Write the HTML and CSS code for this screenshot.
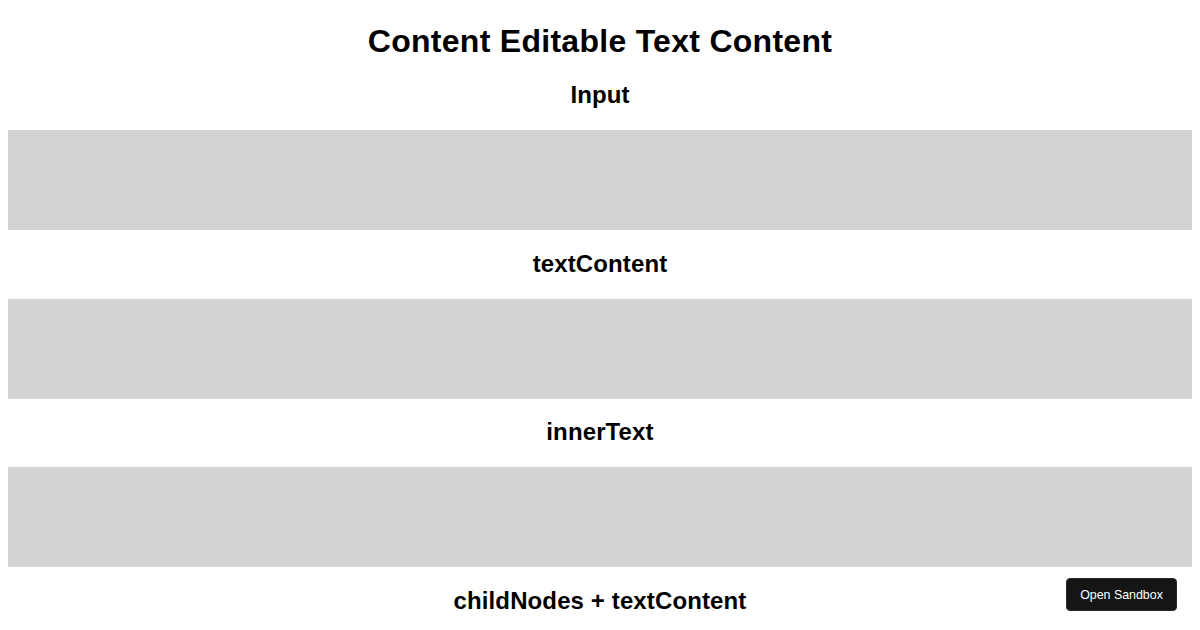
FILE: index.html
```html
<!DOCTYPE html>
<html>
<head>
<meta charset="utf-8">
<link rel="stylesheet" href="styles.css">
</head>
<body>
<h1 class="title">Content Editable Text Content</h1>
<h2 class="label">Input</h2>
<div class="box" contenteditable="true"></div>
<h2 class="label">textContent</h2>
<div class="box"></div>
<h2 class="label">innerText</h2>
<div class="box"></div>
<h2 class="label">childNodes + textContent</h2>
<div class="box"></div>
<a class="sandbox" href="#">Open Sandbox</a>
</body>
</html>
```
FILE: styles.css
```css
body {
  margin: 0 8px 8px;
  font-family: "Liberation Sans", Arial, sans-serif;
  color: #000;
  background: #fff;
}
.title {
  font-size: 32px;
  font-weight: bold;
  text-align: center;
  letter-spacing: 0.28px;
  margin: 23px 0 21.44px;
}
.label {
  font-size: 24px;
  font-weight: bold;
  text-align: center;
  letter-spacing: 0.12px;
  margin: 19.5px 0 20.9px;
}
.box {
  height: 100px;
  background: #d3d3d3;
  outline: none;
}
.sandbox {
  position: fixed;
  right: 23px;
  bottom: 19px;
  width: 111px;
  height: 33px;
  box-sizing: border-box;
  display: flex;
  align-items: center;
  justify-content: center;
  background: #151515;
  color: #fff;
  font-size: 12.4px;
  text-decoration: none;
  border-radius: 4px;
  border: 1px solid #2a2a2a;
}
```
